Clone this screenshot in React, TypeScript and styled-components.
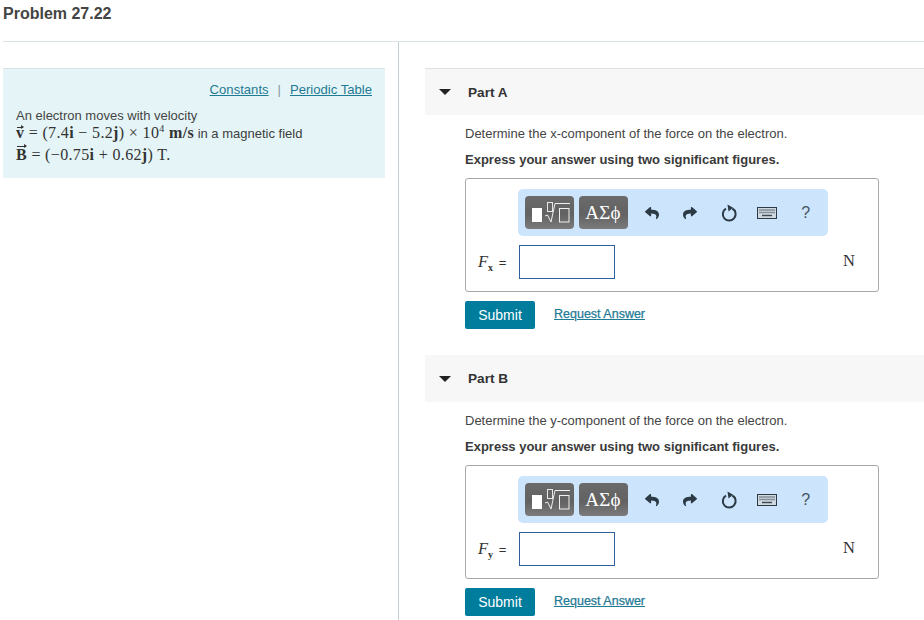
import React from "react";
import styled, { createGlobalStyle } from "styled-components";
import { FaReply, FaShare } from "react-icons/fa";

const Global = createGlobalStyle`
  html, body { margin: 0; padding: 0; background: #fff; }
  body { font-family: "Liberation Sans", Arial, sans-serif; color: #3d3d3d; }
`;

const Page = styled.div`
  width: 924px;
  height: 620px;
  overflow: hidden;
  display: flex;
  flex-direction: column;
`;
const TitleBar = styled.header`
  height: 41px;
  margin-left: 3px;
  border-bottom: 1px solid #dbe2e5;
  flex: none;
`;
const Title = styled.h1`
  margin: 0;
  padding-top: 5px;
  font-size: 16px;
  line-height: 18px;
  font-weight: 700;
  color: #444;
`;
const Columns = styled.div`
  flex: 1;
  display: grid;
  grid-template-columns: 399px 1fr;
  min-height: 0;
`;
const LeftColumn = styled.aside`
  border-right: 1px solid #c5ced3;
  padding: 26px 13px 0 3px;
`;
const InfoPanel = styled.section`
  height: 110px;
  box-sizing: border-box;
  background: #e5f5f7;
  border-top: 1px solid #d9e4e8;
  padding: 12px 13px 0 13px;
`;
const LinkRow = styled.div`
  display: flex;
  justify-content: flex-end;
  align-items: center;
  gap: 9px;
  font-size: 13.1px;
  line-height: 18px;
  color: #8a9499;
`;
const TextLink = styled.a`
  color: #1f7a94;
  text-decoration: underline;
`;
const Statement = styled.div`
  margin-top: 9px;
  font-size: 13px;
  line-height: 16px;
  color: #444;
`;
const MathLine = styled.div`
  font-size: 13px;
  line-height: 17px;
  white-space: nowrap;
  margin-top: ${(p: { $gap: number }) => p.$gap}px;
`;
const M = styled.span`
  font-family: "Liberation Serif", "Times New Roman", serif;
  font-size: 16px;
  letter-spacing: 0.35px;
  color: #333;
`;
const B = styled.b`
  font-weight: 700;
`;
const Vec = styled.b<{ $top: number }>`
  position: relative;
  font-weight: 700;
  &::before {
    content: "";
    position: absolute;
    left: 1px;
    right: 1px;
    top: ${(p) => p.$top}px;
    height: 1px;
    background: #333;
  }
  &::after {
    content: "";
    position: absolute;
    right: 0;
    top: ${(p) => p.$top - 2}px;
    border-left: 3px solid #333;
    border-top: 2.5px solid transparent;
    border-bottom: 2.5px solid transparent;
  }
`;
const Sup = styled.sup`
  font-size: 10px;
  line-height: 0;
`;
const RightColumn = styled.main`
  padding: 26px 0 0 26px;
  display: flex;
  flex-direction: column;
  gap: 26px;
`;
const Part = styled.section``;
const PartHeader = styled.div`
  height: 47px;
  box-sizing: border-box;
  background: #f7f7f7;
  border-top: ${(p: { $top?: boolean }) => (p.$top ? "1px solid #e0e0e0" : "0")};
  display: flex;
  align-items: center;
  padding-left: 14px;
  gap: 17px;
`;
const Caret = styled.span`
  width: 0;
  height: 0;
  border-left: 6px solid transparent;
  border-right: 6px solid transparent;
  border-top: 6px solid #222;
`;
const PartName = styled.h2`
  margin: 0;
  font-size: 13.6px;
  font-weight: 700;
  color: #333;
`;
const PartBody = styled.div`
  padding: 11px 45px 0 40px;
`;
const Prompt = styled.p`
  margin: 0;
  font-size: 13px;
  line-height: 15px;
  color: #444;
`;
const Hint = styled.p`
  margin: 11px 0 11px;
  font-size: 13px;
  line-height: 15px;
  font-weight: 700;
  color: #3a3a3a;
`;
const AnswerBox = styled.div`
  height: 114px;
  box-sizing: border-box;
  border: 1px solid #a8a8a8;
  border-radius: 3px;
  padding: 10px 21px 0 12px;
  display: flex;
  flex-direction: column;
`;
const ToolbarRow = styled.div`
  display: flex;
  justify-content: center;
  padding-left: 10px;
`;
const Toolbar = styled.div`
  width: 310px;
  height: 47px;
  box-sizing: border-box;
  background: #cce5fd;
  border-radius: 5px;
  display: flex;
  align-items: center;
  padding: 0 7px;
`;
const ToolButton = styled.div`
  height: 33px;
  width: ${(p: { $w: number }) => p.$w}px;
  margin-right: 5px;
  border-radius: 4px;
  background: linear-gradient(#6a6a6a, #626262 55%, #7b7b7b);
  display: flex;
  align-items: center;
  justify-content: center;
  color: #fff;
  flex: none;
`;
const Greek = styled.span`
  font-family: "Liberation Serif", serif;
  font-size: 19px;
  letter-spacing: 0.2px;
`;
const IconSlot = styled.div`
  width: 38.5px;
  display: flex;
  justify-content: center;
  align-items: center;
  color: #2b3a44;
  flex: none;
`;
const Help = styled.span`
  font-size: 16px;
  color: #44525c;
`;
const InputRow = styled.div`
  display: flex;
  align-items: center;
  margin-top: 9px;
`;
const VarLabel = styled.div`
  width: 41px;
  flex: none;
  font-family: "Liberation Serif", serif;
  font-size: 16.5px;
  font-style: italic;
  color: #333;
  white-space: nowrap;
`;
const Sub = styled.sub`
  font-size: 10px;
  line-height: 0;
  font-style: normal;
  font-weight: 700;
`;
const Eq = styled.span`
  font-family: "Liberation Sans", sans-serif;
  font-size: 13px;
  font-style: normal;
  margin-left: 2px;
`;
const AnswerInput = styled.div`
  width: 96px;
  height: 34px;
  box-sizing: border-box;
  border: 1px solid #2f5f9e;
  background: #fff;
  flex: none;
`;
const Unit = styled.div`
  margin-left: auto;
  font-family: "Liberation Serif", serif;
  font-size: 16.5px;
  color: #333;
  transform: translate(-2px, -1px);
`;
const Actions = styled.div`
  display: flex;
  align-items: center;
  margin-top: 9px;
  gap: 19px;
`;
const SubmitButton = styled.button`
  width: 70px;
  height: 28px;
  border: 0;
  border-radius: 2px;
  background: #007c9c;
  color: #fff;
  font-family: "Liberation Sans", sans-serif;
  font-size: 14px;
  padding: 0;
`;
const RequestLink = styled.a`
  font-size: 12.5px;
  -webkit-text-stroke: 0.25px #1f7a94;
  color: #1f7a94;
  text-decoration: underline;
  position: relative;
  top: -1px;
`;

const MatrixIcon = () => (
  <svg width="49" height="33" viewBox="0 0 49 33" fill="none">
    <rect x="7" y="12" width="10" height="14" fill="#fff" />
    <rect x="22.5" y="6.5" width="5" height="9" stroke="#e8e8e8" />
    <path d="M20 20l2.5-1 3.5 7 4-18.5h15" stroke="#f0f0f0" />
    <rect x="34.5" y="12.5" width="9.5" height="13.5" stroke="#f0f0f0" />
  </svg>
);

const ResetIcon = () => (
  <svg width="18" height="18" viewBox="0 0 18 18" fill="none">
    <path d="M6 4.6a6.4 6.4 0 1 0 6.3-.1" stroke="#2b3a44" strokeWidth="2" />
    <path d="M7.5 0.5l5.5 3.2L8.5 7.6z" fill="#2b3a44" />
  </svg>
);

const KeyboardIcon = () => (
  <svg width="20" height="12" viewBox="0 0 20 12" fill="none">
    <rect x="0.5" y="0.5" width="19" height="11" fill="#cfd8df" stroke="#2b3a44" />
    <path d="M2.5 3h15M2.5 5.5h15" stroke="#3a4852" strokeWidth="1.4" strokeDasharray="1 1" />
    <path d="M5 8.5h10" stroke="#3a4852" strokeWidth="1.4" />
  </svg>
);

const EditorToolbar = () => (
  <ToolbarRow>
    <Toolbar>
      <ToolButton $w={49}><MatrixIcon /></ToolButton>
      <ToolButton $w={49}><Greek>ΑΣϕ</Greek></ToolButton>
      <IconSlot><FaReply size={14} /></IconSlot>
      <IconSlot><FaShare size={14} /></IconSlot>
      <IconSlot><ResetIcon /></IconSlot>
      <IconSlot><KeyboardIcon /></IconSlot>
      <IconSlot><Help>?</Help></IconSlot>
    </Toolbar>
  </ToolbarRow>
);

const PartBlock = ({ name, axis, sub, top }: { name: string; axis: string; sub: string; top?: boolean }) => (
  <Part>
    <PartHeader $top={top}>
      <Caret />
      <PartName>{name}</PartName>
    </PartHeader>
    <PartBody>
      <Prompt>Determine the {axis}-component of the force on the electron.</Prompt>
      <Hint>Express your answer using two significant figures.</Hint>
      <AnswerBox>
        <EditorToolbar />
        <InputRow>
          <VarLabel>F<Sub>{sub}</Sub><Eq> =</Eq></VarLabel>
          <AnswerInput />
          <Unit>N</Unit>
        </InputRow>
      </AnswerBox>
      <Actions>
        <SubmitButton>Submit</SubmitButton>
        <RequestLink>Request Answer</RequestLink>
      </Actions>
    </PartBody>
  </Part>
);

export default function App() {
  return (
    <Page>
      <Global />
      <TitleBar>
        <Title>Problem 27.22</Title>
      </TitleBar>
      <Columns>
        <LeftColumn>
          <InfoPanel>
            <LinkRow>
              <TextLink>Constants</TextLink>
              <span>|</span>
              <TextLink>Periodic Table</TextLink>
            </LinkRow>
            <Statement>An electron moves with velocity</Statement>
            <MathLine $gap={0}>
              <M><Vec $top={3}>v</Vec> = (7.4<B>i</B> − 5.2<B>j</B>) × 10<Sup>4</Sup> <B as="span">m/s</B></M> in a magnetic field
            </MathLine>
            <MathLine $gap={4}>
              <M><Vec $top={0}>B</Vec> = (−0.75<B>i</B> + 0.62<B>j</B>) T.</M>
            </MathLine>
          </InfoPanel>
        </LeftColumn>
        <RightColumn>
          <PartBlock name="Part A" axis="x" sub="x" top />
          <PartBlock name="Part B" axis="y" sub="y" />
        </RightColumn>
      </Columns>
    </Page>
  );
}
